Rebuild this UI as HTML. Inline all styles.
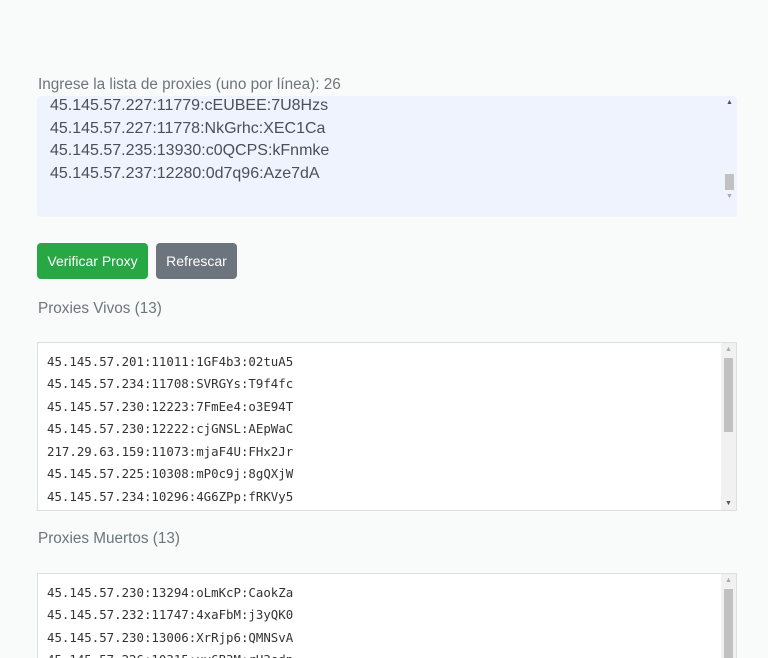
<!DOCTYPE html>
<html style="overflow:hidden;height:658px"><head><meta charset="utf-8"><style>
body{margin:0;background:#f8fbfa;font-family:"Liberation Sans",sans-serif;width:768px;height:658px;overflow:hidden;position:relative}
.lbl{position:absolute;left:38px;font-size:15.3px;color:#6c757d}
.ta{position:absolute;left:37px;width:700px;background:#eff3fd;border-radius:4px;overflow:hidden}
.ta .l{position:absolute;left:13px;font-size:16px;color:#495057;white-space:nowrap}
.box{position:absolute;left:37px;width:698px;background:#fff;border:1px solid #dcdfe2;overflow:hidden}
.box .l{position:absolute;left:9px;font-family:"DejaVu Sans Mono","Liberation Mono",monospace;font-size:12.4px;color:#333;white-space:nowrap}
.sb{position:absolute;right:0;top:0;width:15px;bottom:0;background:#f1f1f1}
.th{position:absolute;left:3px;width:9px;background:#c1c1c1}
.ar{position:absolute;left:4px;font-size:7px;color:#555}
.btn{position:absolute;top:243px;height:36px;border-radius:4px;color:#fff;font-size:14px;line-height:36px;text-align:center}
</style></head><body>
<div class="lbl" style="top:76px">Ingrese la lista de proxies (uno por línea): 26</div>
<div class="ta" style="top:96px;height:121px">
<div class="l" style="top:1px">45.145.57.227:11779:cEUBEE:7U8Hzs</div>
<div class="l" style="top:24px">45.145.57.227:11778:NkGrhc:XEC1Ca</div>
<div class="l" style="top:46px">45.145.57.235:13930:c0QCPS:kFnmke</div>
<div class="l" style="top:69px">45.145.57.237:12280:0d7q96:Aze7dA</div>
<div class="sb" style="background:#eff3fd"><div class="th" style="top:78px;height:16px"></div><div class="ar" style="top:3px">▲</div><div class="ar" style="top:97px;color:#aaa">▼</div></div>
</div>
<div class="btn" style="left:37px;width:111px;background:#28a745">Verificar Proxy</div>
<div class="btn" style="left:156px;width:81px;background:#6c757d">Refrescar</div>
<div class="lbl" style="top:300px">Proxies Vivos (13)</div>
<div class="box" style="top:342px;height:167px">
<div class="l" style="top:11px">45.145.57.201:11011:1GF4b3:02tuA5</div>
<div class="l" style="top:33px">45.145.57.234:11708:SVRGYs:T9f4fc</div>
<div class="l" style="top:56px">45.145.57.230:12223:7FmEe4:o3E94T</div>
<div class="l" style="top:78px">45.145.57.230:12222:cjGNSL:AEpWaC</div>
<div class="l" style="top:101px">217.29.63.159:11073:mjaF4U:FHx2Jr</div>
<div class="l" style="top:123px">45.145.57.225:10308:mP0c9j:8gQXjW</div>
<div class="l" style="top:146px">45.145.57.234:10296:4G6ZPp:fRKVy5</div>
<div class="sb"><div class="th" style="top:15px;height:74px"></div><div class="ar" style="top:3px;color:#aaa">▲</div><div class="ar" style="bottom:3px">▼</div></div>
</div>
<div class="lbl" style="top:530px">Proxies Muertos (13)</div>
<div class="box" style="top:573px;height:100px">
<div class="l" style="top:11px">45.145.57.230:13294:oLmKcP:CaokZa</div>
<div class="l" style="top:33px">45.145.57.232:11747:4xaFbM:j3yQK0</div>
<div class="l" style="top:56px">45.145.57.230:13006:XrRjp6:QMNSvA</div>
<div class="l" style="top:78px">45.145.57.226:10315:uy6B3M:rH3edp</div>
<div class="sb"><div class="th" style="top:15px;height:74px"></div><div class="ar" style="top:3px;color:#aaa">▲</div></div>
</div>
</body></html>
